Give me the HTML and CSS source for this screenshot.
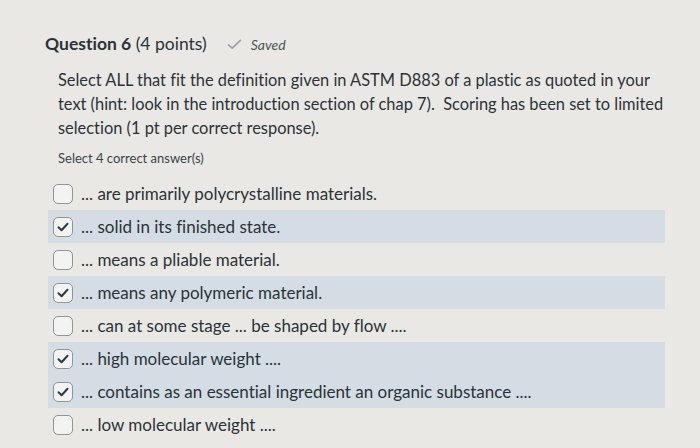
FILE: index.html
```html
<!DOCTYPE html>
<html>
<head>
<meta charset="utf-8">
<link rel="stylesheet" href="styles.css">
</head>
<body>
<div class="page">
  <div class="header">
    <span class="qtitle"><b>Question 6</b> (4 points)</span>
    <span class="saved"><svg class="tick" viewBox="0 0 16 12" width="15" height="11"><path d="M1.5 6.5 L5.5 10 L14.5 1.5" fill="none" stroke="#9aa0a4" stroke-width="1.8" stroke-linecap="round" stroke-linejoin="round"/></svg><i>Saved</i></span>
  </div>
  <div class="body">
    <p class="prompt">Select ALL that fit the definition given in ASTM D883 of a plastic as quoted in your text (hint: look in the introduction section of chap 7).&nbsp; Scoring has been set to limited selection (1 pt per correct response).</p>
    <div class="hint">Select 4 correct answer(s)</div>
  </div>
  <div class="answers">
    <div class="row"><span class="box"></span><span class="label">... are primarily polycrystalline materials.</span></div>
    <div class="row on"><span class="box"><svg viewBox="0 0 12 10" width="12" height="10"><path d="M1.5 5.2 L4.6 8.2 L10.5 1.8" fill="none" stroke="#2d3b45" stroke-width="2" stroke-linecap="round" stroke-linejoin="round"/></svg></span><span class="label">... solid in its finished state.</span></div>
    <div class="row"><span class="box"></span><span class="label">... means a pliable material.</span></div>
    <div class="row on"><span class="box"><svg viewBox="0 0 12 10" width="12" height="10"><path d="M1.5 5.2 L4.6 8.2 L10.5 1.8" fill="none" stroke="#2d3b45" stroke-width="2" stroke-linecap="round" stroke-linejoin="round"/></svg></span><span class="label">... means any polymeric material.</span></div>
    <div class="row"><span class="box"></span><span class="label">... can at some stage ... be shaped by flow ....</span></div>
    <div class="row on"><span class="box"><svg viewBox="0 0 12 10" width="12" height="10"><path d="M1.5 5.2 L4.6 8.2 L10.5 1.8" fill="none" stroke="#2d3b45" stroke-width="2" stroke-linecap="round" stroke-linejoin="round"/></svg></span><span class="label">... high molecular weight ....</span></div>
    <div class="row on"><span class="box"><svg viewBox="0 0 12 10" width="12" height="10"><path d="M1.5 5.2 L4.6 8.2 L10.5 1.8" fill="none" stroke="#2d3b45" stroke-width="2" stroke-linecap="round" stroke-linejoin="round"/></svg></span><span class="label">... contains as an essential ingredient an organic substance ....</span></div>
    <div class="row"><span class="box"></span><span class="label">... low molecular weight ....</span></div>
  </div>
</div>
</body>
</html>
```
FILE: styles.css
```css
html, body {
  margin: 0;
  padding: 0;
  background: #e9e8e4;
}
body {
  font-family: Lato, "Open Sans", sans-serif;
  color: #2b3339;
  font-variant-ligatures: none;
}
.page {
  width: 700px;
  height: 448px;
  overflow: hidden;
  padding-top: 33px;
  box-sizing: border-box;
}
.header {
  display: flex;
  align-items: baseline;
  padding-left: 45px;
  gap: 20px;
}
.qtitle {
  font-size: 17.5px;
}
.qtitle b {
  font-weight: 700;
}
.saved {
  display: flex;
  align-items: center;
  gap: 9px;
  font-size: 14px;
  color: #4b555c;
}
.tick {
  display: block;
}
.body {
  padding-left: 58px;
  padding-top: 14px;
}
.prompt {
  margin: 0;
  width: 616px;
  font-size: 16.4px;
  line-height: 24px;
}
.hint {
  font-size: 13px;
  margin-top: 10px;
  color: #3a444b;
}
.answers {
  margin-top: 11px;
  margin-left: 48px;
  width: 617px;
}
.row {
  display: flex;
  align-items: center;
  height: 33px;
}
.row.on {
  background: #d4dde3;
}
.box {
  width: 20px;
  height: 20px;
  box-sizing: border-box;
  border: 1.5px solid #8f969b;
  border-radius: 5px;
  background: #f3f3f1;
  display: flex;
  align-items: center;
  justify-content: center;
  flex: none;
  margin-left: 5px;
}
.label {
  margin-left: 8px;
  font-size: 17px;
}
```
